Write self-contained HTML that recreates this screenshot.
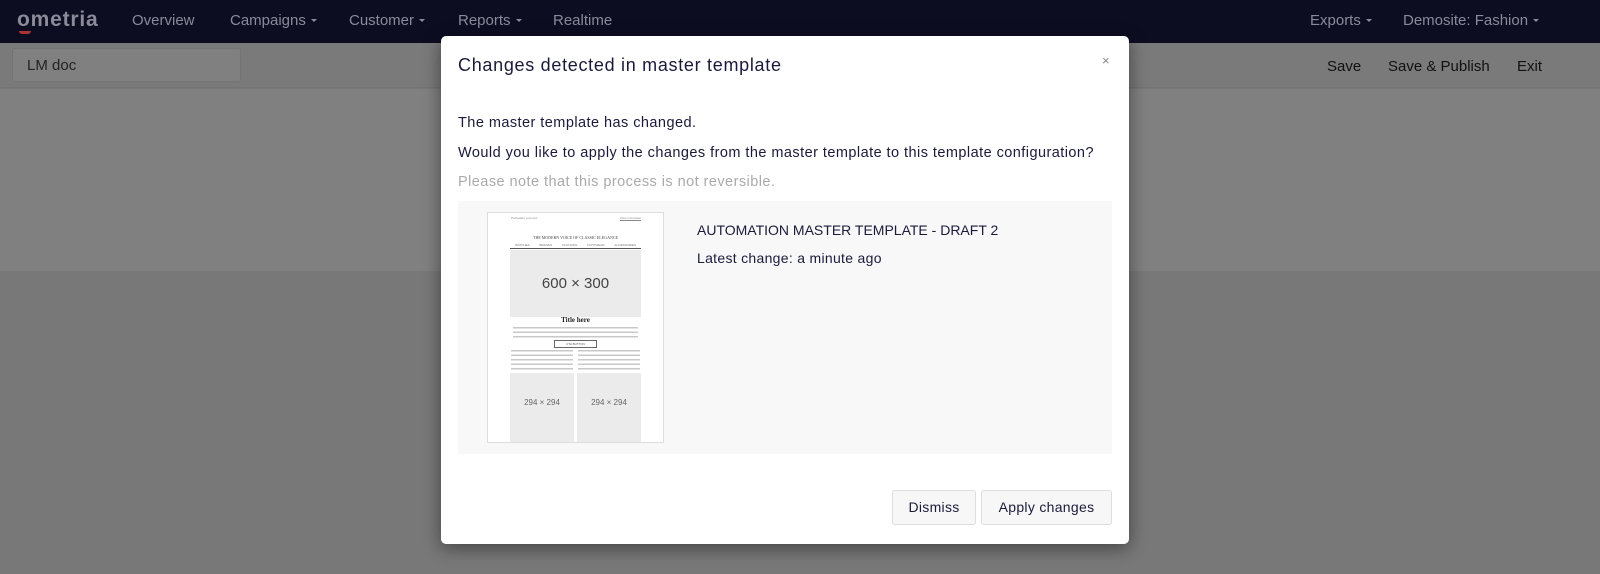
<!DOCTYPE html>
<html><head><style>
*{margin:0;padding:0;box-sizing:border-box}
body{width:1600px;height:574px;overflow:hidden;position:relative;background:#787878;font-family:"Liberation Sans",sans-serif}
.a{position:absolute;white-space:nowrap}
.nav{left:0;top:0;width:1600px;height:43px;background:#0d0d22}
.nav .a{color:#8a8a99;font-size:15px;top:12px}
.car:after{content:"";display:inline-block;margin-left:5px;vertical-align:3px;border-left:3px solid transparent;border-right:3px solid transparent;border-top:3px solid #8a8a99}
.m{left:441px;top:36px;width:688px;height:508px;background:#fff;border-radius:5px;box-shadow:0 4px 18px rgba(0,0,0,.45)}
.m .a{color:#1a1a3a}
.p{font-size:14.5px;letter-spacing:.45px}
.btn{border:1px solid #ddd;background:#f7f7f7;border-radius:3px;font-size:14px;color:#1a1a3a;text-align:center;line-height:33px;letter-spacing:.3px}
</style></head><body>
<div class="a" style="left:0;top:43px;width:1600px;height:45px;background:#7a7a7a;border-bottom:1px solid #737373"></div>
<div class="a" style="left:0;top:89px;width:1600px;height:182px;background:#808080"></div>
<div class="a" style="left:12px;top:48px;width:229px;height:34px;background:#808080;border:1px solid #747474;border-radius:3px;font-size:15px;color:#222;padding:8px 0 0 14px">LM doc</div>
<div class="a" style="left:1327px;top:58px;font-size:15px;color:#111">Save</div>
<div class="a" style="left:1388px;top:58px;font-size:15px;color:#111">Save &amp; Publish</div>
<div class="a" style="left:1517px;top:58px;font-size:15px;color:#111">Exit</div>
<div class="a nav">
<div class="a" style="left:17px;top:8px;font-size:21px;font-weight:bold;color:#8a8a99;letter-spacing:.8px">ometria</div>
<div class="a" style="left:19px;top:31px;width:12px;height:3px;border-radius:0 0 6px 6px;background:#a33"></div>
<div class="a" style="left:132px">Overview</div>
<div class="a car" style="left:230px">Campaigns</div>
<div class="a car" style="left:349px">Customer</div>
<div class="a car" style="left:458px">Reports</div>
<div class="a" style="left:553px">Realtime</div>
<div class="a car" style="left:1310px">Exports</div>
<div class="a car" style="left:1403px">Demosite: Fashion</div>
</div>
<div class="a m">
<div class="a" style="left:17px;top:19px;font-size:18px;letter-spacing:.7px">Changes detected in master template</div>
<div class="a" style="left:661px;top:17px;font-size:13px;color:#888!important">×</div>
<div class="a p" style="left:17px;top:79px">The master template has changed.</div>
<div class="a p" style="left:17px;top:109px">Would you like to apply the changes from the master template to this template configuration?</div>
<div class="a p" style="left:17px;top:138px;color:#aaa!important">Please note that this process is not reversible.</div>
<div class="a" style="left:17px;top:165px;width:654px;height:253px;background:#f8f8f8"></div>
<div class="a" style="left:46px;top:176px;width:177px;height:231px;background:#fff;border:1px solid #ddd;overflow:hidden">
 <div class="a" style="left:23px;top:3px;font-size:3px;color:#888">Preheader your text</div>
 <div class="a" style="left:132px;top:3px;font-size:3px;color:#888;text-decoration:underline">View in browser</div>
 <div class="a" style="left:22px;top:22px;width:131px;text-align:center;font-size:4px;color:#444;font-family:'Liberation Serif',serif">THE MODERN VOICE OF CLASSIC ELEGANCE</div>
 <div class="a" style="left:22px;top:30px;width:131px;font-size:3px;color:#777;display:flex;justify-content:space-around"><span>WATCHES</span><span>BRANDS</span><span>CLOTHING</span><span>FOOTWEAR</span><span>ACCESSORIES</span></div>
 <div class="a" style="left:22px;top:35px;width:131px;height:1px;background:#555"></div>
 <div class="a" style="left:22px;top:37px;width:131px;height:67px;background:#ebebeb;font-size:15px;color:#444;text-align:center;line-height:67px">600 × 300</div>
 <div class="a" style="left:22px;top:103px;width:131px;text-align:center;font-size:7px;font-weight:bold;font-family:'Liberation Serif',serif;color:#222">Title here</div>
 <div class="a" style="left:25px;top:113px;width:125px;height:14px;background:repeating-linear-gradient(#fff 0 1px,#c8c8c8 1px 2.5px,#fff 2.5px 4.5px)"></div>
 <div class="a" style="left:66px;top:127px;width:43px;height:8px;border:1px solid #666;font-size:3px;color:#555;text-align:center;line-height:6px">CTA BUTTON</div>
 <div class="a" style="left:23px;top:136px;width:62px;height:22px;background:repeating-linear-gradient(#fff 0 1px,#c8c8c8 1px 2.5px,#fff 2.5px 4.5px)"></div>
 <div class="a" style="left:90px;top:136px;width:62px;height:22px;background:repeating-linear-gradient(#fff 0 1px,#c8c8c8 1px 2.5px,#fff 2.5px 4.5px)"></div>
 <div class="a" style="left:22px;top:160px;width:64px;height:72px;background:#ebebeb;font-size:8px;color:#666;text-align:center;line-height:60px">294 × 294</div>
 <div class="a" style="left:89px;top:160px;width:64px;height:72px;background:#ebebeb;font-size:8px;color:#666;text-align:center;line-height:60px">294 × 294</div>
</div>
<div class="a" style="left:256px;top:186px;font-size:14px">AUTOMATION MASTER TEMPLATE - DRAFT 2</div>
<div class="a" style="left:256px;top:214px;font-size:14px;letter-spacing:.3px">Latest change: a minute ago</div>
<div class="a btn" style="left:451px;top:454px;width:84px;height:35px">Dismiss</div>
<div class="a btn" style="left:540px;top:454px;width:131px;height:35px">Apply changes</div>
</div>
</body></html>
